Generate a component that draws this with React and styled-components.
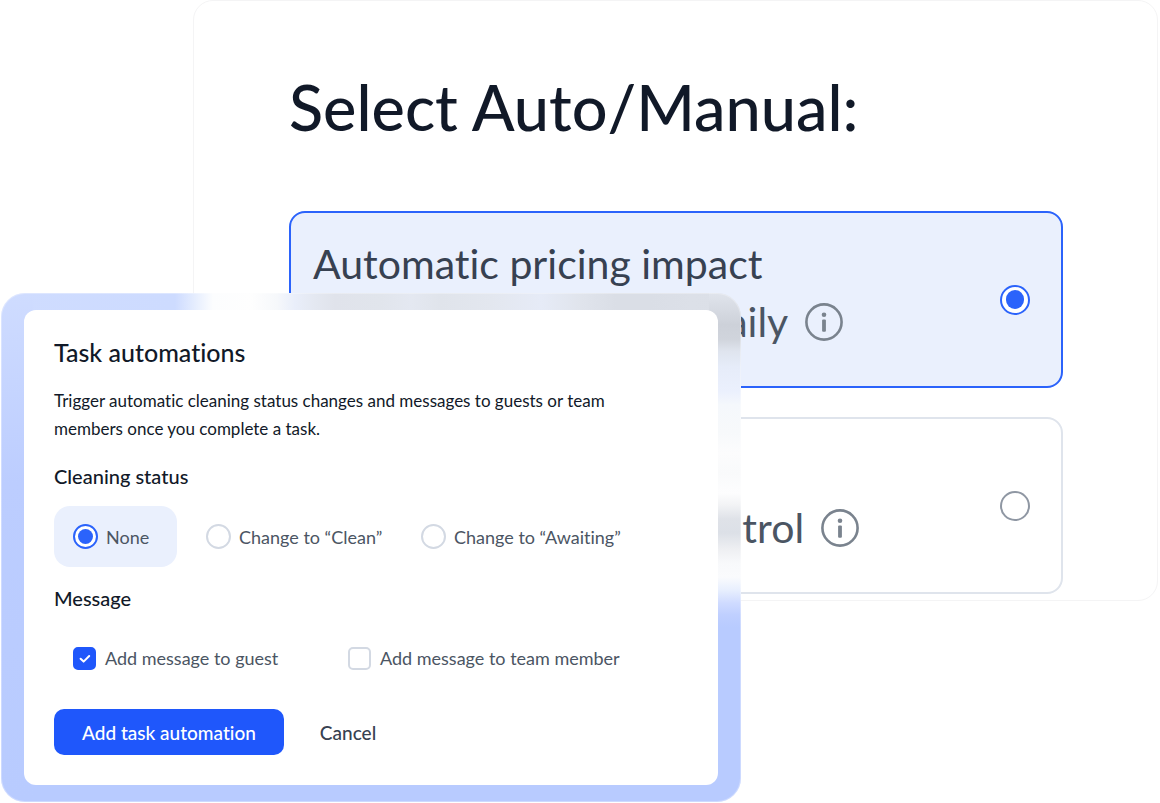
import React, { useState } from 'react';
import styled, { createGlobalStyle } from 'styled-components';

const colors = {
  ink: '#111928',
  text: '#374151',
  textSecondary: '#4b5563',
  primary: '#1f57fb',
  radio: '#2b63fb',
  selected: '#eaf0fd',
  border: '#dfe4ec',
  control: '#d3d9e3',
  icon: '#7a838e',
};

const PRICING_OPTIONS = [
  { value: 'auto', lines: ['Automatic pricing impact', 'adjustments changed daily'] },
  { value: 'manual', lines: ['Prices you set manually', 'left under your own control'] },
];

const STATUS_OPTIONS = [
  { value: 'none', label: 'None' },
  { value: 'clean', label: 'Change to “Clean”' },
  { value: 'awaiting', label: 'Change to “Awaiting”' },
];

const InfoIcon = () => (
  <Info viewBox="0 0 38 38" aria-hidden="true">
    <circle cx="19" cy="19" r="17.6" fill="none" stroke="currentColor" strokeWidth="2.6" />
    <circle cx="19" cy="11.8" r="2.3" fill="currentColor" />
    <rect x="17.1" y="16.6" width="3.8" height="12.2" rx="1" fill="currentColor" />
  </Info>
);

const CheckField = ({ label, checked, onChange }) => (
  <CheckLabel>
    <CheckWrap>
      <Checkbox checked={checked} onChange={(e) => onChange(e.target.checked)} />
      {checked && (
        <Tick viewBox="0 0 23 23" aria-hidden="true">
          <path d="M7.6 11.8 10.6 14.6 16.2 9" />
        </Tick>
      )}
    </CheckWrap>
    {label}
  </CheckLabel>
);

export default function App() {
  const [pricing, setPricing] = useState('auto');
  const [status, setStatus] = useState('none');
  const [guest, setGuest] = useState(true);
  const [team, setTeam] = useState(false);

  return (
    <>
      <GlobalStyle />
      <Stage>
        <Panel>
          <PanelTitle id="pricing-title">Select Auto/Manual:</PanelTitle>
          <Options role="radiogroup" aria-labelledby="pricing-title">
            {PRICING_OPTIONS.map(({ value, lines }) => (
              <Option key={value} $selected={pricing === value}>
                <OptionText>
                  <span>{lines[0]}</span>
                  <OptionLine>
                    {lines[1]}
                    <InfoIcon />
                  </OptionLine>
                </OptionText>
                <Radio
                  name="pricing"
                  $size={30}
                  $ring="#8f97a3"
                  checked={pricing === value}
                  onChange={() => setPricing(value)}
                />
              </Option>
            ))}
          </Options>
        </Panel>

        <Frame>
          <Card>
            <CardTitle>Task automations</CardTitle>
            <Description>
              Trigger automatic cleaning status changes and messages to guests or team members once
              you complete a task.
            </Description>

            <GroupTitle id="status-title">Cleaning status</GroupTitle>
            <StatusGroup role="radiogroup" aria-labelledby="status-title">
              {STATUS_OPTIONS.map(({ value, label }) => (
                <StatusLabel key={value} $selected={status === value}>
                  <Radio
                    name="status"
                    $size={25}
                    $ring={colors.control}
                    checked={status === value}
                    onChange={() => setStatus(value)}
                  />
                  {label}
                </StatusLabel>
              ))}
            </StatusGroup>

            <GroupTitle id="message-title">Message</GroupTitle>
            <MessageGroup role="group" aria-labelledby="message-title">
              <CheckField label="Add message to guest" checked={guest} onChange={setGuest} />
              <CheckField label="Add message to team member" checked={team} onChange={setTeam} />
            </MessageGroup>

            <Actions>
              <PrimaryButton type="button">Add task automation</PrimaryButton>
              <TextButton type="button">Cancel</TextButton>
            </Actions>
          </Card>
        </Frame>
      </Stage>
    </>
  );
}

const GlobalStyle = createGlobalStyle`
  *, *::before, *::after {
    box-sizing: border-box;
  }
  body {
    margin: 0;
    background: #fff;
    color: ${colors.ink};
    font-family: Lato, 'Liberation Sans', sans-serif;
    font-variant-ligatures: none;
  }
  h1, h2, h3, p {
    margin: 0;
    font-weight: 500;
  }
  input, button {
    margin: 0;
    font: inherit;
    font-variant-ligatures: none;
  }
`;

// The panel and the frame share one grid cell so that the frame overlaps the panel.
const Stage = styled.main`
  display: grid;
  grid-template-columns: minmax(0, 1fr);

  & > * {
    grid-area: 1 / 1;
  }
`;

const Panel = styled.section`
  align-self: start;
  margin: 0 2px 0 193px;
  padding: 66px 94px 6px 95px;
  border: 1px solid #f4f4f5;
  border-radius: 20px;
  background: #fff;
`;

const PanelTitle = styled.h1`
  font-size: 63px;
  line-height: 80px;
`;

const Options = styled.div`
  display: grid;
  gap: 29px;
  margin-top: 64px;
`;

const Option = styled.label`
  display: flex;
  align-items: center;
  justify-content: space-between;
  padding: 22px 31px 22px 22px;
  border: 2px solid ${({ $selected }) => ($selected ? colors.radio : colors.border)};
  border-radius: 16px;
  background: ${({ $selected }) => ($selected ? colors.selected : '#fff')};
  color: ${({ $selected }) => ($selected ? colors.text : colors.textSecondary)};
  font-size: 41px;
  line-height: 58px;
`;

const OptionText = styled.span`
  display: grid;
  margin-bottom: 13px;
`;

const OptionLine = styled.span`
  display: flex;
  align-items: center;
  gap: 17px;
  color: ${colors.textSecondary};
`;

const Info = styled.svg`
  width: 38px;
  height: 38px;
  color: ${colors.icon};
`;

const Radio = styled.input.attrs({ type: 'radio' })`
  display: grid;
  place-items: center;
  flex: none;
  appearance: none;
  width: ${({ $size }) => $size}px;
  height: ${({ $size }) => $size}px;
  border: 2px solid ${({ $ring }) => $ring};
  border-radius: 50%;
  background: #fff;

  &:checked {
    border-color: ${colors.radio};
  }
  &:checked::before {
    content: '';
    width: 73%;
    height: 73%;
    border-radius: 50%;
    background: ${colors.radio};
  }
`;

// Frosted glass: the right edge, the left edge and the top edge, over the plain blue of the rest.
const Frame = styled.section`
  width: 100%;
  max-width: 740px;
  margin: 293px 0 0 1px;
  padding: 17px 23px;
  border-radius: 24px;
  box-shadow: inset 0 0 0 1px rgba(255, 255, 255, 0.3);
  background:
    linear-gradient(
        #e0e4ec,
        #d6dae2 17px,
        #cdd1d9 32px,
        #d0d4dc 46px,
        #dfe4ee 58px,
        #e6ecf9 74px,
        #ebf0fd 98px,
        #f5f8fc 112px,
        #f7f9fb 140px,
        #fcfcfd 160px,
        #f9fafb 180px,
        #fdfdfe 200px,
        #f2f3f5 212px,
        #dfe2e8 226px,
        #dce0e7 240px,
        #eeeff2 256px,
        #f8f9fb 270px,
        #fafbfd 284px,
        #e8effe 297px,
        #cfdbff 310px,
        #bfcfff 322px,
        #b8cbff 334px
      )
      right / 32px 100% no-repeat,
    linear-gradient(#cfdcff, #bccdff 190px, #b8cbff) left / 32px 100% no-repeat,
    linear-gradient(
        90deg,
        #cfdcff,
        #cddbff 174px,
        #e8effe 196px,
        #fcfdfe 212px,
        #fefefe 250px,
        #f6f8fb 276px,
        #e9eefa 294px,
        #e4e8f1 314px,
        #e0e3eb 334px,
        #e1e5ec 380px,
        #e4e8f1 410px,
        #e0e4eb 440px,
        #e3e7ef 490px,
        #e6ebf7 540px,
        #e0e4ec 580px,
        #dadee6 615px,
        #dadee6 650px,
        #dce0e8 690px,
        #dbdfe7
      )
      top / 100% 32px no-repeat,
    #b8cbff;
`;

const Card = styled.div`
  padding: 26px 30px 30px;
  border-radius: 12px;
  background: #fff;
`;

const CardTitle = styled.h2`
  font-size: 25px;
  line-height: 32px;
`;

const Description = styled.p`
  max-width: 570px;
  margin: 19px 0 21px;
  font-size: 17px;
  font-weight: 400;
  line-height: 28px;
`;

const GroupTitle = styled.h3`
  font-size: 20px;
  line-height: 24px;
`;

const StatusGroup = styled.div`
  display: grid;
  grid-template-columns: 152px 215px auto;
  justify-content: start;
  margin: 18px 0 19px;
`;

const StatusLabel = styled.label`
  display: flex;
  align-items: center;
  justify-self: start;
  gap: 8px;
  height: 61px;
  padding: ${({ $selected }) => ($selected ? '0 28px 0 19px' : '0')};
  border-radius: 16px;
  background: ${({ $selected }) => ($selected ? colors.selected : 'none')};
  color: ${colors.textSecondary};
  font-size: 18px;
`;

const MessageGroup = styled.div`
  display: grid;
  grid-template-columns: 275px auto;
  justify-content: start;
  margin: 36px 0 39px;
  padding-left: 19px;
`;

const CheckLabel = styled.label`
  display: flex;
  align-items: center;
  gap: 9px;
  color: ${colors.textSecondary};
  font-size: 18px;
  line-height: 24px;
`;

const CheckWrap = styled.span`
  position: relative;
  display: flex;
`;

const Checkbox = styled.input.attrs({ type: 'checkbox' })`
  appearance: none;
  width: 23px;
  height: 23px;
  border: 2px solid ${colors.control};
  border-radius: 5px;
  background: #fff;

  &:checked {
    border-color: ${colors.primary};
    background: ${colors.primary};
  }
`;

const Tick = styled.svg`
  position: absolute;
  inset: 0;
  width: 23px;
  height: 23px;
  fill: none;
  stroke: #fff;
  stroke-width: 2;
  stroke-linecap: round;
  stroke-linejoin: round;
  pointer-events: none;
`;

const Actions = styled.div`
  display: flex;
  align-items: center;
  gap: 36px;
`;

const PrimaryButton = styled.button`
  height: 46px;
  padding: 0 28px;
  border: 0;
  border-radius: 10px;
  background: ${colors.primary};
  color: #fff;
  font-size: 19px;
  font-weight: 500;
`;

const TextButton = styled.button`
  padding: 0;
  border: 0;
  background: none;
  color: ${colors.text};
  font-size: 19px;
  font-weight: 500;
`;
